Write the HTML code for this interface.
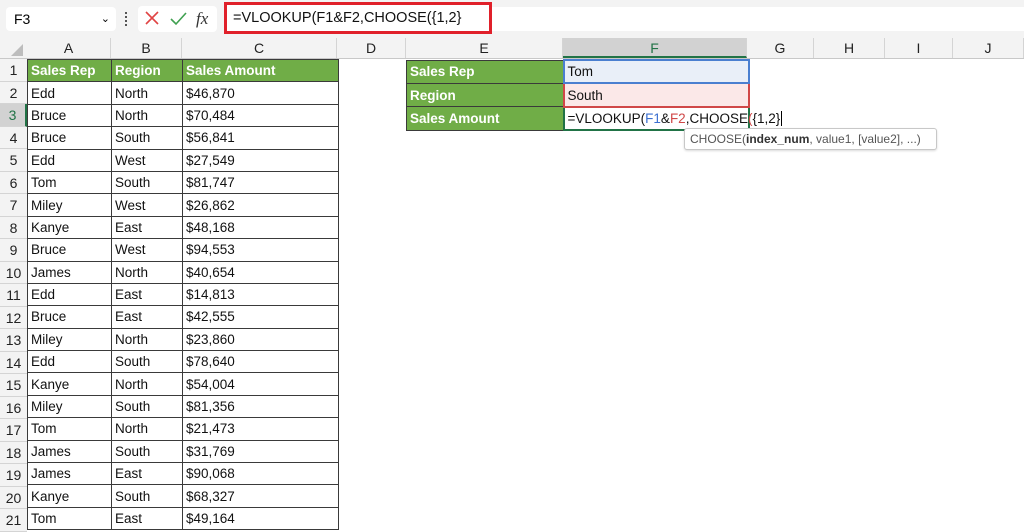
<!DOCTYPE html><html><head><style>
body{margin:0;width:1024px;height:531px;overflow:hidden;background:#fff;font-family:"Liberation Sans",Calibri,sans-serif;position:relative}
.a{position:absolute}
.tb{left:0;top:0;width:1024px;height:38px;background:#f3f3f3}
.hdr{top:38px;height:20px;background:#f3f3f3;border-bottom:1px solid #c8c8c8}
.ch{position:absolute;top:38px;height:20px;line-height:20px;text-align:center;font-size:14px;color:#222;border-right:1px solid #d4d4d4;box-sizing:border-box}
.rh{position:absolute;left:0;width:27px;text-align:center;font-size:14px;color:#222;background:#f3f3f3;border-bottom:1px solid #d4d4d4;box-sizing:border-box}
table{border-collapse:collapse;position:absolute;font-size:13.5px;table-layout:fixed}
td{border:1px solid #3a3a3a;padding:0 0 0 3px;height:21.4px;line-height:21px;color:#111;white-space:nowrap;overflow:hidden}
.g td.h{background:#70ad47;color:#fff;font-weight:bold}
</style></head><body>
<div class="a tb"></div>
<div class="a" style="left:6px;top:7px;width:110px;height:24px;background:#fff;border-radius:4px;font-size:14px;line-height:24px;"><span style="padding-left:8px">F3</span><span style="position:absolute;right:6px;top:0;font-size:11px">&#8964;</span></div>
<div class="a" style="left:125px;top:12px;width:2px;height:14px;border-left:2px dotted #555"></div>
<div class="a" style="left:138px;top:6px;width:79px;height:26px;background:#fff;border-radius:4px"></div>
<svg class="a" style="left:143px;top:9px" width="70" height="20"><path d="M3 3L15 15M15 3L3 15" stroke="#e04444" stroke-width="1.6"/><path d="M28 10L33 15L43 4" stroke="#3fa050" stroke-width="1.6" fill="none"/><text x="53" y="15" font-family="Liberation Serif" font-style="italic" font-size="17" fill="#333">fx</text></svg>
<div class="a" style="left:224px;top:2px;width:256px;height:26px;border:3px solid #e0202a;background:#fff;font-size:14.5px;line-height:26px;padding-left:6px;color:#111">=VLOOKUP(F1&amp;F2,CHOOSE({1,2}</div>
<div class="a" style="left:492px;top:7px;width:532px;height:24px;background:#fff"></div>
<div class="a hdr" style="left:0;width:1024px"></div>
<svg class="a" style="left:10px;top:43px" width="14" height="14"><path d="M13 1L13 13L1 13Z" fill="#bdbdbd"/></svg>
<div class="ch" style="left:27px;width:84px">A</div><div class="ch" style="left:111px;width:71px">B</div><div class="ch" style="left:182px;width:155px">C</div><div class="ch" style="left:337px;width:69px">D</div><div class="ch" style="left:406px;width:157px">E</div><div class="ch" style="left:563px;width:184px;background:#d2d2d2;color:#217346;border-bottom:2px solid #217346">F</div><div class="ch" style="left:747px;width:67px">G</div><div class="ch" style="left:814px;width:71px">H</div><div class="ch" style="left:885px;width:68px">I</div><div class="ch" style="left:953px;width:71px">J</div>
<div class="a" style="left:0;top:59px;width:27px;">
<div class="rh a" style="top:0;height:22.5px;line-height:22px">1</div><div class="rh a" style="top:22.5px;height:22.5px;line-height:22px">2</div><div class="rh a" style="top:45px;height:22.5px;line-height:22px;background:#d2d2d2;color:#217346;border-right:2px solid #217346">3</div><div class="rh a" style="top:67.5px;height:22.5px;line-height:22px">4</div><div class="rh a" style="top:90px;height:22.5px;line-height:22px">5</div><div class="rh a" style="top:112.5px;height:22.5px;line-height:22px">6</div><div class="rh a" style="top:135px;height:22.5px;line-height:22px">7</div><div class="rh a" style="top:157.5px;height:22.5px;line-height:22px">8</div><div class="rh a" style="top:180px;height:22.5px;line-height:22px">9</div><div class="rh a" style="top:202.5px;height:22.5px;line-height:22px">10</div><div class="rh a" style="top:225px;height:22.5px;line-height:22px">11</div><div class="rh a" style="top:247.5px;height:22.5px;line-height:22px">12</div><div class="rh a" style="top:270px;height:22.5px;line-height:22px">13</div><div class="rh a" style="top:292.5px;height:22.5px;line-height:22px">14</div><div class="rh a" style="top:315px;height:22.5px;line-height:22px">15</div><div class="rh a" style="top:337.5px;height:22.5px;line-height:22px">16</div><div class="rh a" style="top:360px;height:22.5px;line-height:22px">17</div><div class="rh a" style="top:382.5px;height:22.5px;line-height:22px">18</div><div class="rh a" style="top:405px;height:22.5px;line-height:22px">19</div><div class="rh a" style="top:427.5px;height:22.5px;line-height:22px">20</div><div class="rh a" style="top:450px;height:22.5px;line-height:22px">21</div>
</div>
<table class="g" style="left:27px;top:59px;width:311px">
<colgroup><col style="width:84px"><col style="width:71px"><col style="width:156px"></colgroup>
<tr><td class="h">Sales Rep</td><td class="h">Region</td><td class="h">Sales Amount</td></tr>
<tr><td>Edd</td><td>North</td><td>$46,870</td></tr>
<tr><td>Bruce</td><td>North</td><td>$70,484</td></tr>
<tr><td>Bruce</td><td>South</td><td>$56,841</td></tr>
<tr><td>Edd</td><td>West</td><td>$27,549</td></tr>
<tr><td>Tom</td><td>South</td><td>$81,747</td></tr>
<tr><td>Miley</td><td>West</td><td>$26,862</td></tr>
<tr><td>Kanye</td><td>East</td><td>$48,168</td></tr>
<tr><td>Bruce</td><td>West</td><td>$94,553</td></tr>
<tr><td>James</td><td>North</td><td>$40,654</td></tr>
<tr><td>Edd</td><td>East</td><td>$14,813</td></tr>
<tr><td>Bruce</td><td>East</td><td>$42,555</td></tr>
<tr><td>Miley</td><td>North</td><td>$23,860</td></tr>
<tr><td>Edd</td><td>South</td><td>$78,640</td></tr>
<tr><td>Kanye</td><td>North</td><td>$54,004</td></tr>
<tr><td>Miley</td><td>South</td><td>$81,356</td></tr>
<tr><td>Tom</td><td>North</td><td>$21,473</td></tr>
<tr><td>James</td><td>South</td><td>$31,769</td></tr>
<tr><td>James</td><td>East</td><td>$90,068</td></tr>
<tr><td>Kanye</td><td>South</td><td>$68,327</td></tr>
<tr><td>Tom</td><td>East</td><td>$49,164</td></tr>
</table>
<table class="g" style="left:406px;top:59px;width:342px">
<colgroup><col style="width:157px"><col style="width:185px"></colgroup>
<tr><td class="h">Sales Rep</td><td style="background:#e9eff8;border:2px solid #4a7fd0">Tom</td></tr>
<tr><td class="h">Region</td><td style="background:#fbe8e8;border:2px solid #d04848">South</td></tr>
<tr><td class="h">Sales Amount</td><td style="border:2px solid #217346;overflow:visible">=VLOOKUP(<span style="color:#3b6fd0">F1</span>&amp;<span style="color:#d04848">F2</span>,CHOOSE<span style="color:#d04848">(</span>{1,2}<span style="border-left:1px solid #000;margin-left:1px"></span></td></tr>
</table>
<div class="a" style="left:684px;top:128px;width:246px;height:20px;border:1px solid #c8c8c8;border-radius:3px;background:#fff;font-size:12px;line-height:20px;color:#555;padding-left:5px;box-shadow:0 1px 2px rgba(0,0,0,.15)">CHOOSE(<b style="color:#333">index_num</b>, value1, [value2], ...)</div>
</body></html>
